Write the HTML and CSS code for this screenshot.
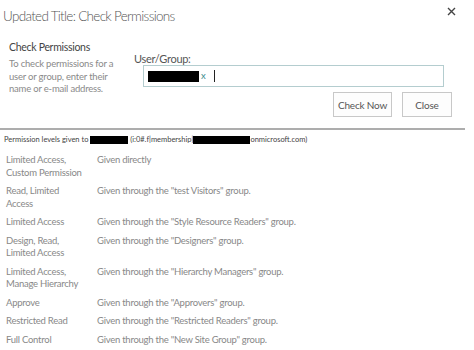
FILE: index.html
```html
<!DOCTYPE html>
<html lang="en">
<head>
  <meta charset="UTF-8" />
  <title>Check Permissions</title>
  <link rel="stylesheet" href="styles.css">
</head>
<body>

<div class="dialog">
  <div class="dialog-head">
    <h1>Updated Title: Check Permissions</h1>
    <span class="close-x">
      <svg width="9" height="9" viewBox="0 0 9 9"><path d="M1 1L8 8M8 1L1 8" stroke="#444" stroke-width="1.4"/></svg>
    </span>
  </div>

  <div class="check-form">
    <div class="intro">
      <h2>Check Permissions</h2>
      <p>To check permissions for a<br>user or group, enter their<br>name or e-mail address.</p>
    </div>
    <div class="picker">
      <label>User/Group:</label>
      <div class="people-box">
        <span class="redact redact-user"></span><span class="remove">x</span><span class="caret"></span>
      </div>
      <div class="actions">
        <button class="btn">Check Now</button>
        <button class="btn">Close</button>
      </div>
    </div>
  </div>

  <hr class="divider">

  <p class="given-to">Permission levels given to <span class="redact redact-a"></span> (i:0#.f|membership|<span class="redact redact-b"></span>onmicrosoft.com)</p>

  <table class="perm-table">
    <tr><td class="level">Limited Access,<br>Custom Permission</td><td>Given directly</td></tr>
    <tr><td class="level">Read, Limited<br>Access</td><td>Given through the "test Visitors" group.</td></tr>
    <tr><td class="level">Limited Access</td><td>Given through the "Style Resource Readers" group.</td></tr>
    <tr><td class="level">Design, Read,<br>Limited Access</td><td>Given through the "Designers" group.</td></tr>
    <tr><td class="level">Limited Access,<br>Manage Hierarchy</td><td>Given through the "Hierarchy Managers" group.</td></tr>
    <tr><td class="level">Approve</td><td>Given through the "Approvers" group.</td></tr>
    <tr><td class="level">Restricted Read</td><td>Given through the "Restricted Readers" group.</td></tr>
    <tr><td class="level">Full Control</td><td>Given through the "New Site Group" group.</td></tr>
  </table>
</div>

</body>
</html>
```

FILE: styles.css
```css
body {
  font-family: Lato, 'Open Sans', sans-serif;
  background: #fff;
  color: #444;
  margin: 0;
  padding: 0;
}

.dialog {
  width: 474px;
  height: 350px;
  overflow: hidden;
}

.dialog-head {
  display: flex;
  justify-content: space-between;
  align-items: flex-start;
  padding: 6px 18px 0 3px;
}

.dialog-head h1 {
  margin: 0;
  font-size: 13.5px;
  font-weight: 300;
  letter-spacing: -0.7px;
  color: #555;
  line-height: 20px;
}

.close-x {
  display: flex;
  padding-top: 1px;
}

.check-form {
  display: flex;
  padding: 14px 22px 0 9px;
}

.intro {
  width: 125px;
  white-space: nowrap;
}

.intro h2 {
  margin: 0;
  font-size: 10.5px;
  font-weight: 400;
  letter-spacing: -0.3px;
  color: #444;
  line-height: 14px;
}

.intro p {
  margin: 4px 0 0;
  font-size: 9.5px;
  letter-spacing: -0.2px;
  color: #8a8a8a;
  line-height: 12.5px;
}

.picker {
  flex: 1;
  padding-top: 12px;
}

.picker label {
  display: block;
  font-size: 11px;
  letter-spacing: -0.3px;
  color: #555;
  line-height: 13px;
}

.people-box {
  display: flex;
  align-items: center;
  margin: 0 8px 0 9px;
  height: 20px;
  border: 1px solid #b4cdcf;
  padding-left: 4px;
}

.redact {
  display: inline-block;
  background: #000;
  vertical-align: middle;
}

.redact-user {
  width: 51px;
  height: 11px;
}

.remove {
  font-size: 9.5px;
  color: #3b8a8c;
  margin-left: 2px;
  line-height: 10px;
}

.caret {
  width: 1px;
  height: 12px;
  background: #222;
  margin-left: 8px;
}

.actions {
  display: flex;
  justify-content: flex-end;
  gap: 10px;
  margin-top: 5px;
}

.btn {
  font-family: inherit;
  font-size: 10px;
  letter-spacing: -0.2px;
  color: #555;
  background: #fdfdfd;
  border: 1px solid #c8c8c8;
  height: 25px;
  padding: 0;
  width: 59px;
}

.btn + .btn {
  width: 50px;
}

.divider {
  border: none;
  border-top: 2px solid #adadad;
  margin: 11px 9px 0 0;
}

.given-to {
  margin: 5px 0 0 4px;
  font-size: 7.5px;
  color: #444;
  line-height: 10px;
}

.redact-a {
  width: 38px;
  height: 8px;
}

.redact-b {
  width: 57px;
  height: 8px;
}

.perm-table {
  border-collapse: collapse;
  margin: 6px 0 0 6px;
  font-size: 9.5px;
  letter-spacing: -0.25px;
  color: #888;
}

.perm-table td {
  padding: 3px 0;
  line-height: 12.5px;
  vertical-align: top;
  white-space: nowrap;
}

.perm-table .level {
  width: 91px;
  padding-right: 0;
}
```
